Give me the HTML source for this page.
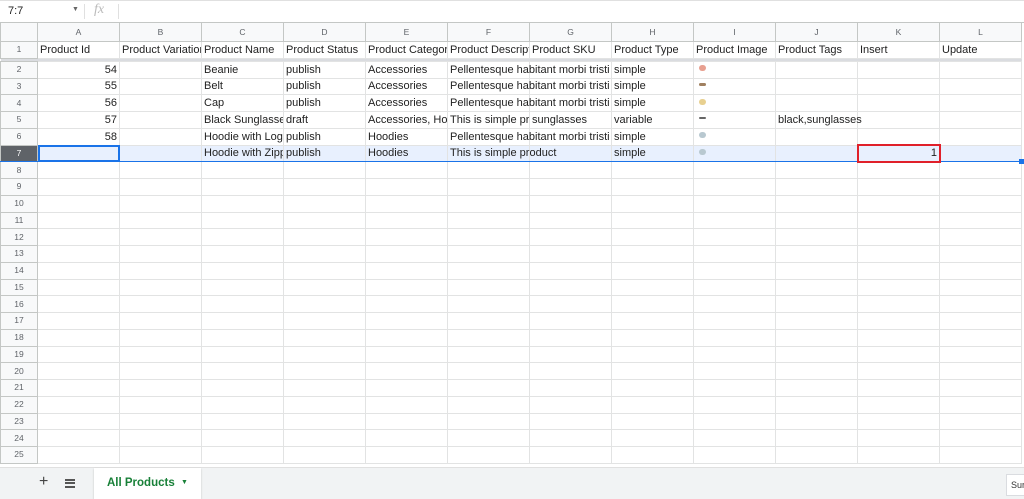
<!DOCTYPE html>
<html><head><style>
body{margin:0;width:1024px;height:498px;overflow:hidden;background:#fff;font-family:"Liberation Sans",Arial,sans-serif;position:relative}
.fb{position:absolute;left:0;top:0;width:1024px;height:21px;border-top:1px solid #e0e0e0;border-bottom:1px solid #c4c7c5;background:#fff}
table{position:absolute;left:0;top:22px;width:1021px;border-collapse:collapse;table-layout:fixed;font-size:11px;color:#222}
td{border:1px solid #e2e3e3;padding:0 2px;white-space:nowrap;overflow:hidden;height:15.75px;line-height:15px;vertical-align:bottom}
tr.h td{background:#f8f9fa;color:#5f6368;font-size:8.5px;text-align:center;height:18px;border-color:#c4c7c5;vertical-align:middle}
td.rn{background:#f8f9fa;color:#5f6368;font-size:8.5px;text-align:center;border-color:#c4c7c5;padding:0;vertical-align:middle}
tr.fz td{height:2px;padding:0;background:#dadce0;border:none;line-height:0}
.r{text-align:right}
tr.sel td{background:#e8f0fe;border-top:1px solid #1a73e8;border-bottom:1px solid #1a73e8}
tr.sel td.rn{background:#5f6368;color:#fff}
.ic{display:inline-block;width:7px;height:6px;border-radius:3px;margin-left:3px;vertical-align:middle;margin-bottom:3px}
.ov{overflow:visible}
.ov span{display:inline-block;width:160px;overflow:hidden;vertical-align:bottom}
</style></head><body>
<div class="fb">
<span style="position:absolute;left:8px;top:4px;font-size:11px;color:#222">7:7</span>
<span style="position:absolute;left:72px;top:5px;font-size:7px;color:#666">▼</span>
<div style="position:absolute;left:84px;top:3px;width:1px;height:15px;background:#e0e0e0"></div>
<span style="position:absolute;left:94px;top:1px;font-size:14px;color:#bbb;font-family:'Liberation Serif',serif;font-style:italic">fx</span>
<div style="position:absolute;left:118px;top:3px;width:1px;height:15px;background:#e0e0e0"></div>
</div>
<table>
<colgroup><col style="width:37px"><col style="width:82px"><col style="width:82px"><col style="width:82px"><col style="width:82px"><col style="width:82px"><col style="width:82px"><col style="width:82px"><col style="width:82px"><col style="width:82px"><col style="width:82px"><col style="width:82px"><col style="width:82px"></colgroup>
<tr class="h"><td></td><td>A</td><td>B</td><td>C</td><td>D</td><td>E</td><td>F</td><td>G</td><td>H</td><td>I</td><td>J</td><td>K</td><td>L</td></tr>
<tr><td class="rn">1</td><td>Product Id</td><td>Product Variation</td><td>Product Name</td><td>Product Status</td><td>Product Category</td><td>Product Description</td><td>Product SKU</td><td>Product Type</td><td>Product Image</td><td>Product Tags</td><td>Insert</td><td>Update</td></tr>
<tr class="fz"><td></td><td></td><td></td><td></td><td></td><td></td><td></td><td></td><td></td><td></td><td></td><td></td><td></td></tr>
<tr><td class="rn">2</td><td class="r">54</td><td></td><td>Beanie</td><td>publish</td><td>Accessories</td><td class="ov"><span>Pellentesque habitant morbi tristique</span></td><td></td><td>simple</td><td><span class="ic" style="background:#e8a090"></span></td><td></td><td></td><td></td></tr>
<tr><td class="rn">3</td><td class="r">55</td><td></td><td>Belt</td><td>publish</td><td>Accessories</td><td class="ov"><span>Pellentesque habitant morbi tristique</span></td><td></td><td>simple</td><td><span class="ic" style="background:#a08060;height:3px"></span></td><td></td><td></td><td></td></tr>
<tr><td class="rn">4</td><td class="r">56</td><td></td><td>Cap</td><td>publish</td><td>Accessories</td><td class="ov"><span>Pellentesque habitant morbi tristique</span></td><td></td><td>simple</td><td><span class="ic" style="background:#e8d090"></span></td><td></td><td></td><td></td></tr>
<tr><td class="rn">5</td><td class="r">57</td><td></td><td>Black Sunglasses</td><td>draft</td><td>Accessories, Hoodies</td><td>This is simple product</td><td>sunglasses</td><td>variable</td><td><span class="ic" style="background:#666;height:2px"></span></td><td style="overflow:visible">black,sunglasses</td><td></td><td></td></tr>
<tr><td class="rn">6</td><td class="r">58</td><td></td><td>Hoodie with Logo</td><td>publish</td><td>Hoodies</td><td class="ov"><span>Pellentesque habitant morbi tristique</span></td><td></td><td>simple</td><td><span class="ic" style="background:#b8c8d0"></span></td><td></td><td></td><td></td></tr>
<tr class="sel"><td class="rn">7</td><td style="outline:2px solid #1a73e8;outline-offset:-2px"></td><td></td><td>Hoodie with Zipper</td><td>publish</td><td>Hoodies</td><td style="overflow:visible">This is simple product</td><td></td><td>simple</td><td><span class="ic" style="background:#b8c8d0"></span></td><td></td><td class="r" style="outline:2px solid #e0202a;outline-offset:-1px">1</td><td></td></tr>
<tr><td class="rn">8</td><td></td><td></td><td></td><td></td><td></td><td></td><td></td><td></td><td></td><td></td><td></td><td></td></tr>
<tr><td class="rn">9</td><td></td><td></td><td></td><td></td><td></td><td></td><td></td><td></td><td></td><td></td><td></td><td></td></tr>
<tr><td class="rn">10</td><td></td><td></td><td></td><td></td><td></td><td></td><td></td><td></td><td></td><td></td><td></td><td></td></tr>
<tr><td class="rn">11</td><td></td><td></td><td></td><td></td><td></td><td></td><td></td><td></td><td></td><td></td><td></td><td></td></tr>
<tr><td class="rn">12</td><td></td><td></td><td></td><td></td><td></td><td></td><td></td><td></td><td></td><td></td><td></td><td></td></tr>
<tr><td class="rn">13</td><td></td><td></td><td></td><td></td><td></td><td></td><td></td><td></td><td></td><td></td><td></td><td></td></tr>
<tr><td class="rn">14</td><td></td><td></td><td></td><td></td><td></td><td></td><td></td><td></td><td></td><td></td><td></td><td></td></tr>
<tr><td class="rn">15</td><td></td><td></td><td></td><td></td><td></td><td></td><td></td><td></td><td></td><td></td><td></td><td></td></tr>
<tr><td class="rn">16</td><td></td><td></td><td></td><td></td><td></td><td></td><td></td><td></td><td></td><td></td><td></td><td></td></tr>
<tr><td class="rn">17</td><td></td><td></td><td></td><td></td><td></td><td></td><td></td><td></td><td></td><td></td><td></td><td></td></tr>
<tr><td class="rn">18</td><td></td><td></td><td></td><td></td><td></td><td></td><td></td><td></td><td></td><td></td><td></td><td></td></tr>
<tr><td class="rn">19</td><td></td><td></td><td></td><td></td><td></td><td></td><td></td><td></td><td></td><td></td><td></td><td></td></tr>
<tr><td class="rn">20</td><td></td><td></td><td></td><td></td><td></td><td></td><td></td><td></td><td></td><td></td><td></td><td></td></tr>
<tr><td class="rn">21</td><td></td><td></td><td></td><td></td><td></td><td></td><td></td><td></td><td></td><td></td><td></td><td></td></tr>
<tr><td class="rn">22</td><td></td><td></td><td></td><td></td><td></td><td></td><td></td><td></td><td></td><td></td><td></td><td></td></tr>
<tr><td class="rn">23</td><td></td><td></td><td></td><td></td><td></td><td></td><td></td><td></td><td></td><td></td><td></td><td></td></tr>
<tr><td class="rn">24</td><td></td><td></td><td></td><td></td><td></td><td></td><td></td><td></td><td></td><td></td><td></td><td></td></tr>
<tr><td class="rn">25</td><td></td><td></td><td></td><td></td><td></td><td></td><td></td><td></td><td></td><td></td><td></td><td></td></tr>
</table>
<div style="position:absolute;left:1019px;top:159px;width:5px;height:5px;background:#1a73e8"></div>
<div style="position:absolute;left:0;top:467px;width:1024px;height:31px;background:#f1f3f4;border-top:1px solid #e0e0e0">
<span style="position:absolute;left:39px;top:5px;font-size:16px;color:#444">+</span>
<div style="position:absolute;left:65px;top:11px;width:10px;height:9px;border-top:2px solid #555;border-bottom:2px solid #555;box-sizing:border-box"></div>
<div style="position:absolute;left:65px;top:14px;width:10px;height:2px;background:#555"></div>
<div style="position:absolute;left:94px;top:0;width:107px;height:31px;background:#fff;box-shadow:0 1px 2px rgba(0,0,0,.2)">
<span style="position:absolute;left:13px;top:9px;font-size:11.5px;color:#188038;font-weight:bold">All Products</span>
<span style="position:absolute;left:87px;top:11px;font-size:7px;color:#188038">▼</span></div>
<div style="position:absolute;left:1006px;top:6px;width:22px;height:20px;background:#fff;border:1px solid #dadce0;font-size:9px;line-height:20px;padding-left:4px;color:#333">Sur</div>
</div>
</body></html>
